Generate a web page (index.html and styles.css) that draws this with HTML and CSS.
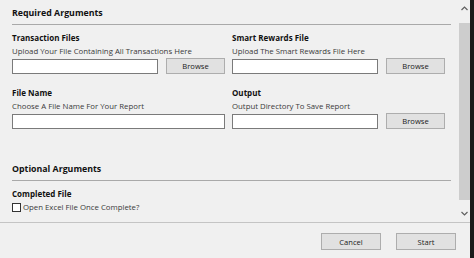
FILE: index.html
```html
<!DOCTYPE html>
<html>
<head>
<meta charset="utf-8">
<link rel="stylesheet" href="styles.css">
</head>
<body>
<div class="window">
  <div class="body">
    <div class="main">
      <div class="content">
        <section class="group">
          <h2 class="heading">Required Arguments</h2>
          <div class="rule"></div>
          <div class="grid">
            <div class="field">
              <div class="label">Transaction Files</div>
              <div class="desc">Upload Your File Containing All Transactions Here</div>
              <div class="row">
                <div class="input short"></div>
                <div class="btn browse">Browse</div>
              </div>
            </div>
            <div class="field">
              <div class="label">Smart Rewards File</div>
              <div class="desc">Upload The Smart Rewards File Here</div>
              <div class="row">
                <div class="input short"></div>
                <div class="btn browse">Browse</div>
              </div>
            </div>
            <div class="field">
              <div class="label">File Name</div>
              <div class="desc">Choose A File Name For Your Report</div>
              <div class="row">
                <div class="input full"></div>
              </div>
            </div>
            <div class="field">
              <div class="label">Output</div>
              <div class="desc">Output Directory To Save Report</div>
              <div class="row">
                <div class="input short"></div>
                <div class="btn browse">Browse</div>
              </div>
            </div>
          </div>
        </section>
        <section class="group optional">
          <h2 class="heading">Optional Arguments</h2>
          <div class="rule"></div>
          <div class="label">Completed File</div>
          <label class="check">
            <span class="box"></span>
            <span class="check-text">Open Excel File Once Complete?</span>
          </label>
        </section>
      </div>
      <div class="scrollbar">
        <div class="arrow up">
          <svg width="7" height="5" viewBox="0 0 7 5"><path d="M0.5 4 L3.5 1 L6.5 4" fill="none" stroke="#606060" stroke-width="1.2"/></svg>
        </div>
        <div class="track"><div class="thumb"></div></div>
        <div class="arrow down">
          <svg width="7" height="5" viewBox="0 0 7 5"><path d="M0.5 1 L3.5 4 L6.5 1" fill="none" stroke="#606060" stroke-width="1.2"/></svg>
        </div>
      </div>
    </div>
    <div class="footer">
      <div class="btn action">Cancel</div>
      <div class="btn action">Start</div>
    </div>
  </div>
  <div class="edge"></div>
</div>
</body>
</html>
```
FILE: styles.css
```css
html, body {
  margin: 0;
  padding: 0;
  background: #f0f0f0;
}
body {
  font-family: "Open Sans", "Noto Sans", sans-serif;
  color: #000;
}
.window {
  width: 474px;
  height: 258px;
  display: flex;
  overflow: hidden;
}
.body {
  width: 470px;
  display: flex;
  flex-direction: column;
}
.edge {
  width: 4px;
  background: #1a1a1a;
}
.main {
  height: 222px;
  display: flex;
  border-bottom: 1px solid #c4c4c4;
}
.content {
  width: 439px;
  padding: 5px 8px 0 12px;
}
.heading {
  margin: 0;
  height: 16px;
  line-height: 16px;
  font-size: 8.8px;
  font-weight: 700;
  color: #111;
}
.rule {
  margin-top: 3px;
  height: 1px;
  background: #a9a9a9;
}
.grid {
  margin-top: 7px;
  display: grid;
  grid-template-columns: 213px 213px;
  column-gap: 7px;
  row-gap: 13px;
}
.label {
  height: 12px;
  line-height: 12px;
  font-size: 8px;
  font-weight: 700;
  color: #111;
}
.desc {
  margin-top: 1px;
  height: 12px;
  line-height: 12px;
  font-size: 7.8px;
  color: #3a3a3a;
}
.row {
  margin-top: 1px;
  height: 16px;
  display: flex;
  align-items: center;
  gap: 8px;
}
.input {
  background: #fff;
  border: 1px solid #7a7a7a;
  box-sizing: border-box;
  height: 15px;
  margin-top: 1px;
}
.input.short { width: 146px; }
.input.full { width: 213px; }
.btn {
  box-sizing: border-box;
  background: #e1e1e1;
  border: 1px solid #adadad;
  display: flex;
  align-items: center;
  justify-content: center;
  font-size: 7.6px;
  color: #1a1a1a;
}
.browse {
  width: 59px;
  height: 16px;
}
.optional {
  margin-top: 32px;
}
.optional .rule + .label {
  margin-top: 7px;
}
.check {
  display: flex;
  align-items: center;
  height: 12px;
}
.box {
  width: 9px;
  height: 9px;
  box-sizing: border-box;
  border: 1px solid #333;
  background: #fff;
  margin-top: 3px;
}
.check-text {
  margin-left: 2px;
  font-size: 7.8px;
  line-height: 12px;
  color: #3a3a3a;
  margin-top: 1px;
}
.scrollbar {
  width: 11px;
  display: flex;
  flex-direction: column;
  background: #f0f0f0;
}
.arrow {
  height: 17px;
  display: flex;
  justify-content: center;
  align-items: center;
}
.track {
  flex: 1;
  padding: 6px 0 5px;
  display: flex;
}
.thumb {
  flex: 1;
  background: #cdcdcd;
}
.footer {
  flex: 1;
  display: flex;
  justify-content: flex-end;
  align-items: flex-start;
  padding: 10px 14px 0 0;
  gap: 15px;
}
.action {
  width: 60px;
  height: 17px;
}
```
